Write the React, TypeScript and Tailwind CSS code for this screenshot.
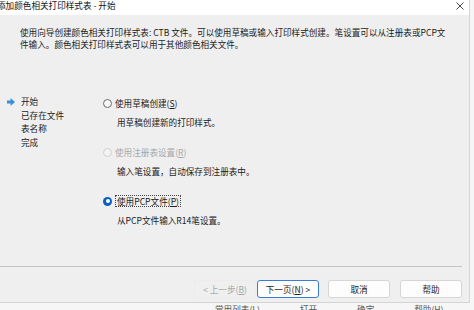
import React from 'react';

const font = "font-['Noto_Sans_CJK_SC','Noto_Sans',sans-serif]";

const Radio = ({ state }: { state: 'off' | 'disabled' | 'on' }) => {
  if (state === 'on') {
    return (
      <span className="flex h-[9px] w-[9px] items-center justify-center rounded-full bg-[#0a5fc4]">
        <span className="h-[4px] w-[4px] rounded-full bg-white" />
      </span>
    );
  }
  return (
    <span
      className={
        state === 'disabled'
          ? 'h-[9px] w-[9px] rounded-full border border-[#cfcfcf] bg-[#f4f4f4]'
          : 'h-[9px] w-[9px] rounded-full border border-[#6b6b6b] bg-[#f7f7f7]'
      }
    />
  );
};

const Option = ({
  state,
  label,
  hotkey,
  desc,
  focused,
}: {
  state: 'off' | 'disabled' | 'on';
  label: string;
  hotkey: string;
  desc: string;
  focused?: boolean;
}) => (
  <div className="flex flex-col">
    <div className="flex h-[12px] items-center gap-[3px]">
      <Radio state={state} />
      <span
        className={
          (state === 'disabled' ? 'text-[#a8a8a8] ' : 'text-[#1b1b1b] ') +
          (focused ? 'border border-dotted border-[#444] px-[1px] leading-[10px]' : 'leading-[12px]')
        }
      >
        {label}(<span className="underline">{hotkey}</span>)
      </span>
    </div>
    <div className="mt-[7px] h-[12px] pl-[14px] leading-[12px] text-[#1b1b1b]">{desc}</div>
  </div>
);

const Button = ({
  children,
  variant,
}: {
  children: React.ReactNode;
  variant?: 'default' | 'disabled';
}) => (
  <div
    className={
      'flex h-[18px] w-[62px] items-center justify-center rounded-[3px] border ' +
      (variant === 'default'
        ? 'border-[#3a7bd5] bg-[#fdfdfd] text-[#1b1b1b]'
        : variant === 'disabled'
        ? 'border-[#ececec] bg-[#efefef] text-[#a8a8a8]'
        : 'border-[#d6d6d6] bg-[#fdfdfd] text-[#1b1b1b]')
    }
  >
    {children}
  </div>
);

export default function App() {
  return (
    <div className={`relative h-[310px] w-[474px] overflow-hidden bg-[#f6f6f6] text-[8.6px] ${font}`}>
      <div className="flex h-[303px] w-[470px] flex-col border-r border-b border-[#d4d4d4] bg-[#efefef]">
        {/* title bar */}
        <div className="flex h-[15px] shrink-0 items-start justify-between bg-white">
          <span className="ml-[-3px] leading-[11px] text-[#111]">添加颜色相关打印样式表 - 开始</span>
          <svg className="mr-[5px] mt-[2px]" width="8" height="8" viewBox="0 0 8 8">
            <path d="M0.5 0.5L7.5 7.5M7.5 0.5L0.5 7.5" stroke="#333" strokeWidth="0.9" />
          </svg>
        </div>

        {/* intro */}
        <div className="pl-[20px] pt-[12px] leading-[11.5px] text-[#1b1b1b]">
          <div>使用向导创建颜色相关打印样式表: CTB 文件。可以使用草稿或输入打印样式创建。笔设置可以从注册表或PCP文</div>
          <div>件输入。颜色相关打印样式表可以用于其他颜色相关文件。</div>
        </div>

        {/* main */}
        <div className="mt-[45px] flex">
          <div className="flex w-[103px] flex-col pl-[7px] leading-[13.7px] text-[#1b1b1b]">
            <div className="flex items-center">
              <svg width="8" height="8" viewBox="0 0 8 8" className="mr-[6px]">
                <path d="M0 2.6H3.6V0L8 4L3.6 8V5.4H0Z" fill="#3b8de0" />
              </svg>
              开始
            </div>
            <div className="pl-[14px]">已存在文件</div>
            <div className="pl-[14px]">表名称</div>
            <div className="pl-[14px]">完成</div>
          </div>
          <div className="mt-[2px] flex flex-col gap-[18px]">
            <Option state="off" label="使用草稿创建" hotkey="S" desc="用草稿创建新的打印样式。" />
            <Option state="disabled" label="使用注册表设置" hotkey="R" desc="输入笔设置，自动保存到注册表中。" />
            <Option state="on" label="使用PCP文件" hotkey="P" desc="从PCP文件输入R14笔设置。" focused />
          </div>
        </div>

        <div className="flex-1" />

        {/* footer */}
        <div className="mr-[7px] h-px bg-[#c4c4c4]" />
        <div className="flex justify-end gap-[1px] pr-[7px] pt-[13px] pb-[4px]">
          <Button variant="disabled">&lt; 上一步(<span className="underline">B</span>)</Button>
          <Button variant="default">下一页(<span className="underline">N</span>) &gt;</Button>
          <div className="ml-[8px]">
            <Button>取消</Button>
          </div>
          <div className="ml-[9px]">
            <Button>帮助</Button>
          </div>
        </div>
      </div>

      {/* background app peeking below */}
      <div className="flex h-[7px] items-start gap-[40px] overflow-hidden pl-[215px] leading-[11px] text-[#555]">
        <span className="mt-[1px]">常用列表(L)</span>
        <span className="mt-[1px]">打开</span>
        <span className="mt-[1px]">确定</span>
        <span className="mt-[1px]">帮助(H)</span>
      </div>
    </div>
  );
}
